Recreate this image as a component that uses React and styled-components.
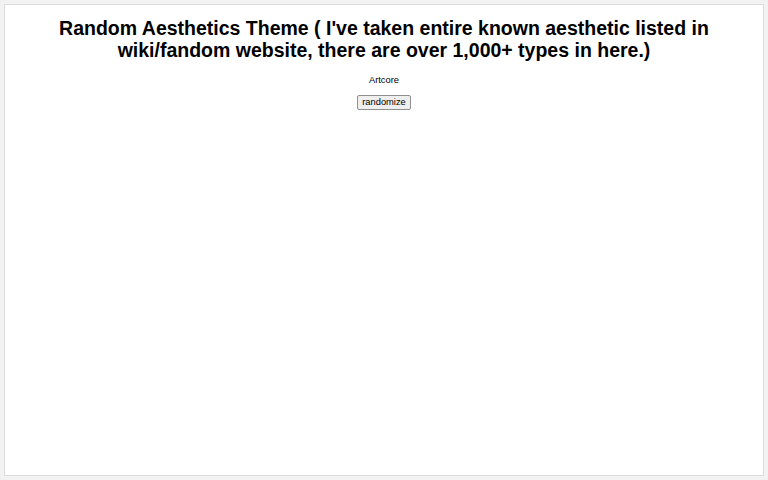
import React, { useState } from "react";
import styled, { createGlobalStyle } from "styled-components";

const Global = createGlobalStyle`
  html, body { margin: 0; padding: 0; background: #f2f2f2; }
  body { font-family: "Liberation Sans", Arial, sans-serif; }
`;

const Page = styled.div`
  padding: 4px;
  height: 480px;
  box-sizing: border-box;
`;

const Card = styled.main`
  height: 100%;
  box-sizing: border-box;
  background: #ffffff;
  border: 1px solid #dcdcdc;
  display: flex;
  flex-direction: column;
  align-items: center;
  padding: 12px 20px;
`;

const Title = styled.h1`
  margin: 0;
  font-size: 19.5px;
  line-height: 22px;
  font-weight: 700;
  color: #000;
  text-align: center;
`;

const Aesthetic = styled.p`
  margin: 14px 0 0;
  font-size: 9.33px;
  line-height: 11px;
  color: #000;
`;

const Button = styled.button`
  margin-top: 9px;
  font-family: "Liberation Sans", Arial, sans-serif;
  font-size: 9.33px;
  line-height: 11px;
  padding: 1px 4px;
  background: #efefef;
  border: 1px solid #8f8f8f;
  border-radius: 2px;
  color: #000;
`;

const names = ["Artcore", "Vaporwave", "Cottagecore", "Dark Academia", "Cyberpunk"];

export default function App() {
  const [name, setName] = useState("Artcore");
  return (
    <>
      <Global />
      <Page>
        <Card>
          <Title>
            Random Aesthetics Theme ( I've taken entire known aesthetic listed in
            <br />
            wiki/fandom website, there are over 1,000+ types in here.)
          </Title>
          <Aesthetic>{name}</Aesthetic>
          <Button onClick={() => setName(names[Math.floor(Math.random() * names.length)])}>
            randomize
          </Button>
        </Card>
      </Page>
    </>
  );
}
